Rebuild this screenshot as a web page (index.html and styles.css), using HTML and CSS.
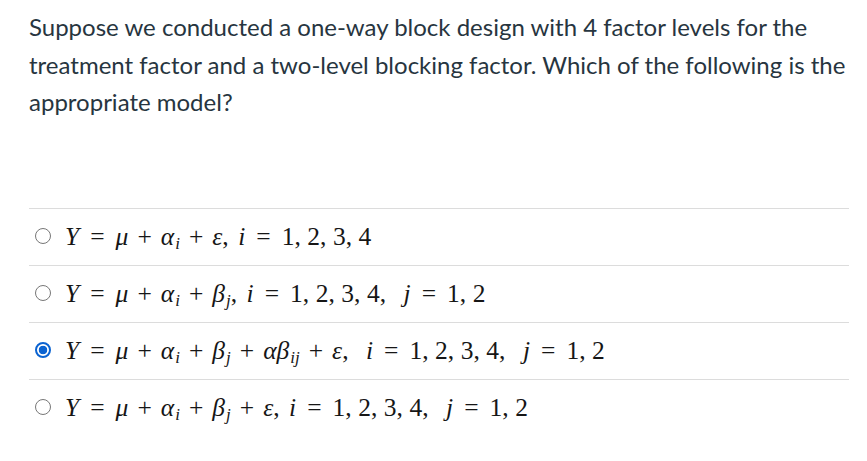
FILE: index.html
```html
<!DOCTYPE html>
<html>
<head>
<meta charset="utf-8">
<link rel="stylesheet" href="styles.css">
</head>
<body>
<div class="question">
  <p class="prompt">Suppose we conducted a one-way block design with 4 factor levels for the treatment factor and a two-level blocking factor. Which of the following is the appropriate model?</p>
  <div class="answers">
    <label class="option">
      <span class="radio"></span>
      <span class="math"><i>Y</i><span class="rel">=</span><i>μ</i><span class="bin">+</span><i>α</i><sub><i>i</i></sub><span class="bin">+</span><i>ε</i><span class="p">,</span><span class="sp"></span><i>i</i><span class="rel">=</span>1<span class="p">,</span>2<span class="p">,</span>3<span class="p">,</span>4</span>
    </label>
    <label class="option">
      <span class="radio"></span>
      <span class="math"><i>Y</i><span class="rel">=</span><i>μ</i><span class="bin">+</span><i>α</i><sub><i>i</i></sub><span class="bin">+</span><i>β</i><sub><i>j</i></sub><span class="p">,</span><span class="sp"></span><i>i</i><span class="rel">=</span>1<span class="p">,</span>2<span class="p">,</span>3<span class="p">,</span>4<span class="p">,</span><span class="sp2"></span><i>j</i><span class="rel">=</span>1<span class="p">,</span>2</span>
    </label>
    <label class="option">
      <span class="radio checked"></span>
      <span class="math"><i>Y</i><span class="rel">=</span><i>μ</i><span class="bin">+</span><i>α</i><sub><i>i</i></sub><span class="bin">+</span><i>β</i><sub><i>j</i></sub><span class="bin">+</span><i>αβ</i><sub><i>ij</i></sub><span class="bin">+</span><i>ε</i><span class="p">,</span><span class="sp2"></span><i>i</i><span class="rel">=</span>1<span class="p">,</span>2<span class="p">,</span>3<span class="p">,</span>4<span class="p">,</span><span class="sp2"></span><i>j</i><span class="rel">=</span>1<span class="p">,</span>2</span>
    </label>
    <label class="option">
      <span class="radio"></span>
      <span class="math"><i>Y</i><span class="rel">=</span><i>μ</i><span class="bin">+</span><i>α</i><sub><i>i</i></sub><span class="bin">+</span><i>β</i><sub><i>j</i></sub><span class="bin">+</span><i>ε</i><span class="p">,</span><span class="sp"></span><i>i</i><span class="rel">=</span>1<span class="p">,</span>2<span class="p">,</span>3<span class="p">,</span>4<span class="p">,</span><span class="sp2"></span><i>j</i><span class="rel">=</span>1<span class="p">,</span>2</span>
    </label>
  </div>
</div>
</body>
</html>
```
FILE: styles.css
```css
html, body {
  margin: 0;
  padding: 0;
  background: #ffffff;
}
.question {
  padding: 8px 18px 0 29px;
  font-family: Lato, "Open Sans", sans-serif;
  color: #2d3b45;
}
.prompt {
  margin: 0;
  font-size: 24px;
  line-height: 37.5px;
  color: #273540;
}
.answers {
  margin-top: 87px;
}
.option {
  display: flex;
  align-items: center;
  height: 56px;
  border-top: 1px solid #dcdcdc;
  padding-left: 6px;
}
.radio {
  width: 16px;
  height: 16px;
  border: 1px solid #777777;
  border-radius: 50%;
  box-sizing: border-box;
  flex: none;
  margin-right: 14px;
  margin-top: -1px;
}
.radio.checked {
  border: 2px solid #0b63d1;
  background: radial-gradient(circle, #0b63d1 0 4px, #ffffff 4.6px);
}
.math {
  font-family: "Liberation Serif", "DejaVu Serif", serif;
  font-size: 25.5px;
  color: #161616;
  white-space: nowrap;
}
.math i {
  font-style: italic;
}
.math sub {
  font-size: 17px;
  vertical-align: -4px;
  line-height: 0;
  margin-left: 1px;
}
.rel {
  margin: 0 11px;
}
.bin {
  margin: 0 9px;
}
.p {
  margin-right: 6.5px;
}
.sp {
  display: inline-block;
  width: 3px;
}
.sp2 {
  display: inline-block;
  width: 11px;
}
```
